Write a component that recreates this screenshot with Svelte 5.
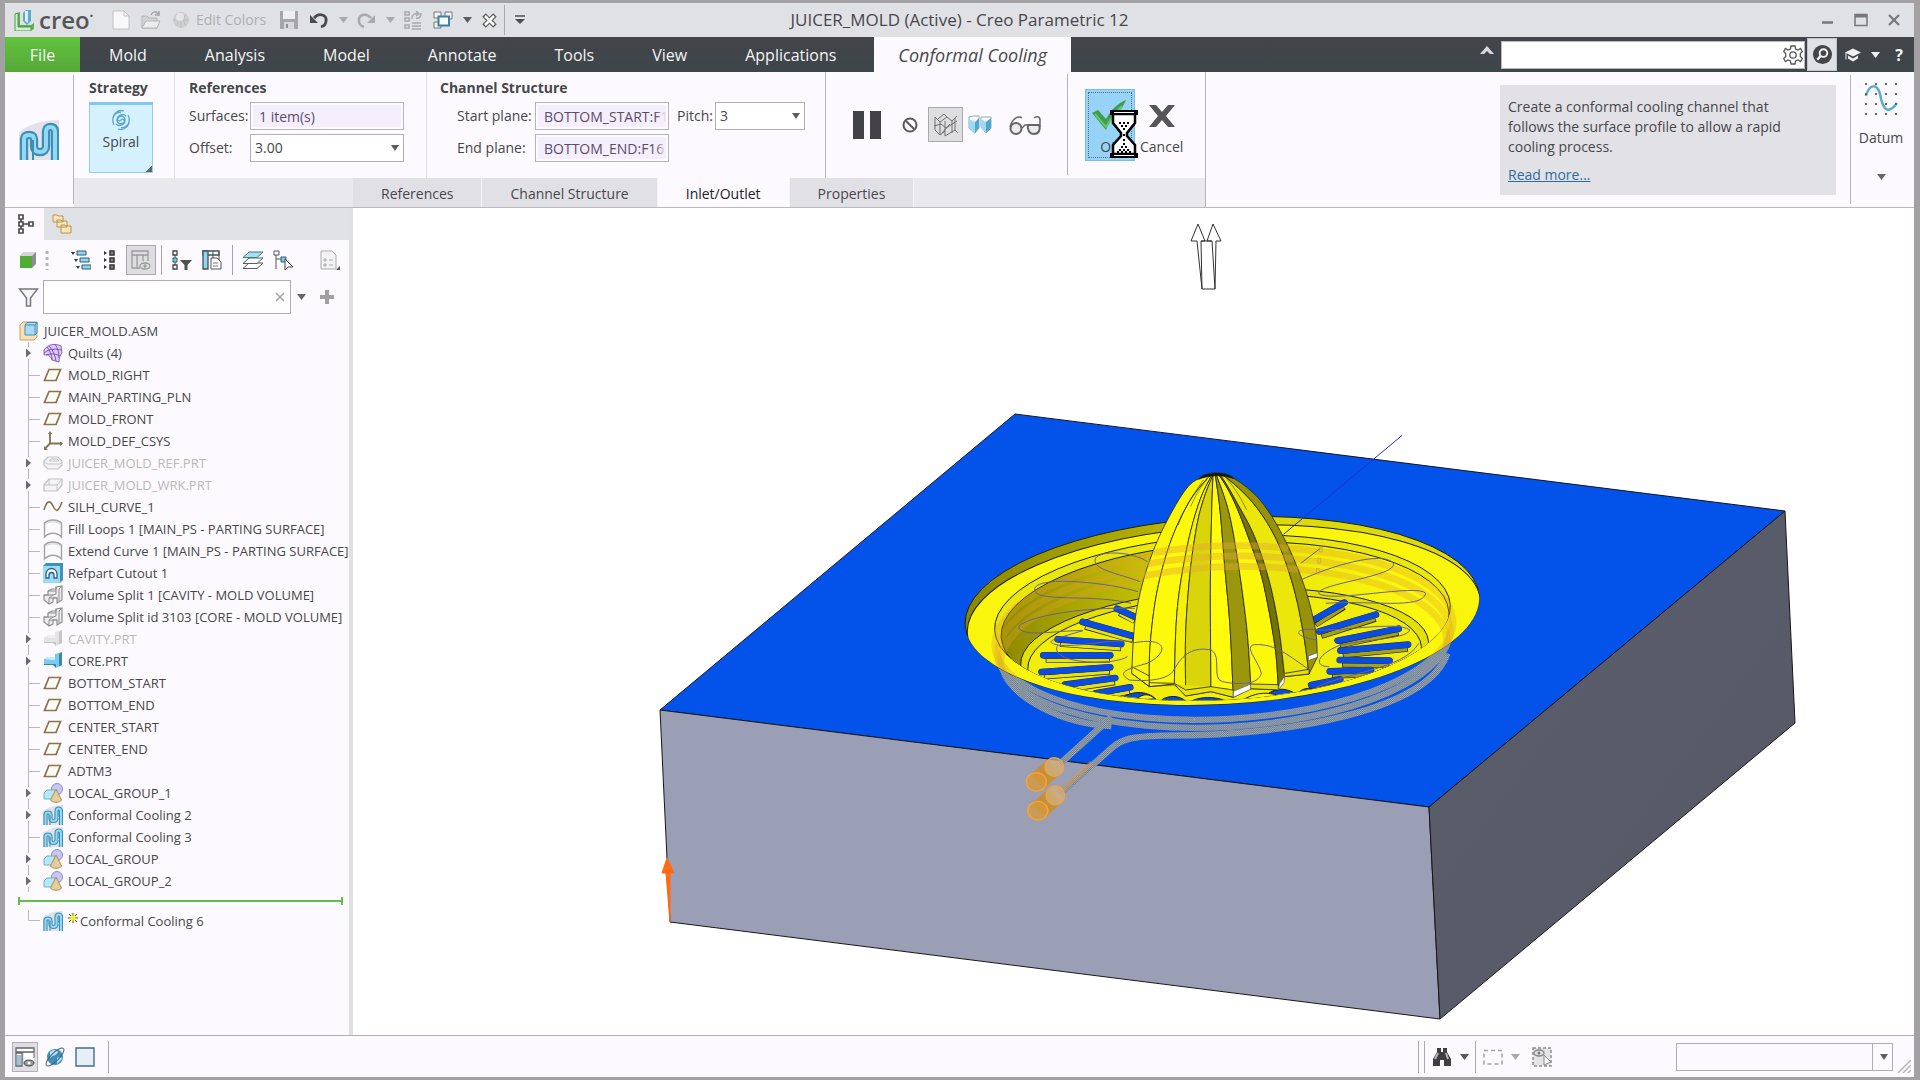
<script>
  const menus = ['Mold', 'Analysis', 'Model', 'Annotate', 'Tools', 'View', 'Applications'];
  const subtabs = ['References', 'Channel Structure', 'Inlet/Outlet', 'Properties'];
  let active = $state('Inlet/Outlet');

  const tree = [
    { t: 'Quilts (4)', i: 'quilt', x: true },
    { t: 'MOLD_RIGHT', i: 'plane' },
    { t: 'MAIN_PARTING_PLN', i: 'plane' },
    { t: 'MOLD_FRONT', i: 'plane' },
    { t: 'MOLD_DEF_CSYS', i: 'csys' },
    { t: 'JUICER_MOLD_REF.PRT', i: 'refpart', x: true, dim: true },
    { t: 'JUICER_MOLD_WRK.PRT', i: 'wrkpart', x: true, dim: true },
    { t: 'SILH_CURVE_1', i: 'curve' },
    { t: 'Fill Loops 1 [MAIN_PS - PARTING SURFACE]', i: 'surface' },
    { t: 'Extend Curve 1 [MAIN_PS - PARTING SURFACE]', i: 'surface' },
    { t: 'Refpart Cutout 1', i: 'cutout' },
    { t: 'Volume Split 1 [CAVITY - MOLD VOLUME]', i: 'split' },
    { t: 'Volume Split id 3103 [CORE - MOLD VOLUME]', i: 'split' },
    { t: 'CAVITY.PRT', i: 'cavity', x: true, dim: true },
    { t: 'CORE.PRT', i: 'core', x: true },
    { t: 'BOTTOM_START', i: 'plane' },
    { t: 'BOTTOM_END', i: 'plane' },
    { t: 'CENTER_START', i: 'plane' },
    { t: 'CENTER_END', i: 'plane' },
    { t: 'ADTM3', i: 'plane' },
    { t: 'LOCAL_GROUP_1', i: 'group', x: true },
    { t: 'Conformal Cooling 2', i: 'cooling', x: true },
    { t: 'Conformal Cooling 3', i: 'cooling' },
    { t: 'LOCAL_GROUP', i: 'group', x: true },
    { t: 'LOCAL_GROUP_2', i: 'group', x: true }
  ];

  // drain slots in the dish floor: x1, y1, x2, y2
  const slots = [
    [496, 506, 545, 530], [400, 546, 540, 588], [330, 598, 507, 612], [290, 646, 476, 646],
    [285, 696, 476, 682], [350, 734, 490, 714], [436, 760, 532, 742],
    [1046, 540, 1132, 488], [1062, 574, 1220, 524], [1114, 602, 1284, 566],
    [1122, 632, 1310, 614], [1120, 660, 1258, 662], [1092, 694, 1206, 690], [1040, 735, 1120, 718]
  ];

  // ribs of the cone, tip to base, left to right
  const ribs = [
    [[285, 40], [225, 62], [185, 106], [132, 200], [95, 285], [65, 380], [44, 490], [35, 640]],
    [[285, 40], [262, 55], [205, 130], [150, 250], [110, 400], [90, 560], [88, 680]],
    [[285, 40], [272, 52], [240, 120], [208, 230], [180, 380], [168, 500], [163, 672]],
    [[285, 40], [276, 52], [250, 120], [230, 200], [210, 340], [197, 520], [197, 708]],
    [[285, 40], [279, 52], [274, 200], [271, 400], [273, 695]],
    [[285, 40], [287, 52], [300, 150], [315, 330], [330, 500], [340, 712]],
    [[285, 40], [292, 52], [325, 150], [350, 280], [380, 500], [393, 686]],
    [[285, 40], [302, 52], [345, 130], [395, 260], [430, 370], [465, 560], [475, 690]],
    [[285, 40], [306, 52], [352, 130], [404, 230], [447, 360], [476, 500], [494, 650]],
    [[285, 40], [318, 52], [400, 130], [470, 240], [520, 380], [550, 520], [567, 642]],
    [[285, 40], [340, 54], [420, 120], [490, 230], [550, 370], [585, 500], [592, 592]]
  ];
  const fills = ['#faf60a', '#fdf90a', '#f4f00a', '#dad50a', '#fffb0a', '#9b970c', '#fcf80a', '#74720a', '#ebe70a', '#96920a'];

  function smooth(p) {
    const out = [];
    for (let i = 0; i < p.length - 1; i++) {
      const a = p[Math.max(i - 1, 0)], b = p[i], c = p[i + 1], d = p[Math.min(i + 2, p.length - 1)];
      for (let k = 0; k < 6; k++) {
        const t = k / 6;
        out.push([0, 1].map((j) =>
          (0.5 * (2 * b[j] + (c[j] - a[j]) * t + (2 * a[j] - 5 * b[j] + 4 * c[j] - d[j]) * t * t + (3 * b[j] - a[j] - 3 * c[j] + d[j]) * t * t * t)).toFixed(1)
        ));
      }
    }
    out.push(p[p.length - 1]);
    return out;
  }
  const lines = ribs.map(smooth);
  const facets = fills.map((fill, i) => ({ fill, points: [...lines[i], ...[...lines[i + 1]].reverse()].map((q) => q.join(',')).join(' ') }));
</script>

{#snippet coolingGlyph()}
  <path d="M0 6C5 2 12 0 20 0V20H0Z" fill="#e2e2e8" />
  <path d="M2.500 20V9.500Q2.500 7.500 5 7.500T7.500 9.500V13Q7.500 16 10.500 16T13.500 13V6Q13.500 3.500 15.700 3.500T18 6V20" fill="none" stroke="#3e8fb5" stroke-width="4.200" />
  <path d="M2.500 20V9.500Q2.500 7.500 5 7.500T7.500 9.500V13Q7.500 16 10.500 16T13.500 13V6Q13.500 3.500 15.700 3.500T18 6V20" fill="none" stroke="#93d9f6" stroke-width="2" />
  <path d="M7 10V20" stroke="#3e8fb5" />
{/snippet}

{#snippet icon(name)}
  <svg class="ico" viewBox="0 0 20 20" aria-hidden="true">
    {#if name === 'plane'}
      <path d="M6 4.500H17.500L13 15.500H1.500Z" fill="#fffdf6" stroke="#8a7449" stroke-width="1.700" />
    {:else if name === 'quilt'}
      <path d="M1 7C5 1 12 0 18 3L19 10C17 12 16 15 16 19L9 17C8 13 4 11 1 12Z" fill="#dccbf5" stroke="#8a63c0" />
      <path d="M1 10C7 5 13 6 19 7M6 3C10 7 12 12 13 18M12 1C15 6 16 9 16 15M3 12C9 10 13 11 17 13M4 4C7 8 9 12 9 17" fill="none" stroke="#7d55b8" />
    {:else if name === 'csys'}
      <path d="M7 1.500V13M7 12.500H19M7 12.500L1.500 18" fill="none" stroke="#80744c" stroke-width="1.800" />
      <path d="M5 3L7 0L9 3ZM17 10.500L20 12.500L17 15ZM1 15V19H5Z" fill="#80744c" />
    {:else if name === 'refpart'}
      <path d="M5 4H15L19 8V12L15 16H5L1 12V8Z" fill="#f4f4f5" stroke="#c3c3c5" stroke-width="1.200" />
      <path d="M1 9L5 11H17L19 9M6 8L8 6H14L16 8Z" fill="none" stroke="#c3c3c5" />
    {:else if name === 'wrkpart'}
      <path d="M6 4H19V10L14 16H1V10Z" fill="#f4f4f5" stroke="#c0c0c3" stroke-width="1.200" />
      <path d="M1 10H14L19 4M14 10V16M6 4V10" fill="none" stroke="#c0c0c3" />
    {:else if name === 'curve'}
      <path d="M1 13C4 3 7 3 10 9S15 16 19 5" fill="none" stroke="#857448" stroke-width="1.600" />
    {:else if name === 'surface'}
      <path d="M1.500 4C6 0 14 0 18.500 4V18C14 13 6 13 1.500 18Z" fill="#fafafc" stroke="#a3a3a6" stroke-width="1.400" />
      <path d="M2 5.500C7 2 13 2 18 5.500" fill="none" stroke="#d5d5d8" />
    {:else if name === 'cutout'}
      <path d="M0 3L3 0H20V17L17 20H0Z" fill="#3f93b8" />
      <path d="M0 3H17V20H0Z" fill="#9adcf7" />
      <path d="M3 15V11a5.500 5.500 0 0 1 11 0V15H11V12a2.500 2.500 0 0 0-5 0V15Z" fill="#fff" stroke="#2d617c" stroke-width="1.300" />
    {:else if name === 'split'}
      <path d="M13 2L19 1V15L14 18V13H10V17L6 19L1 15V10H5V6L9 4H13Z" fill="#ececee" stroke="#8e8e91" stroke-width="1.200" />
      <path d="M13 2V9L10 10H1M19 1L16 4V16M5 6H13M6 13H14M6 13V19M6 13L10 10" fill="none" stroke="#8e8e91" />
    {:else if name === 'cavity' || name === 'core'}
      {@const c = name === 'core'}
      <path d="M12 3L19 1V14L13 17V13H1V8L5 6H12Z" fill={c ? '#7accee' : '#e4e4e5'} />
      <path d="M1 8L5 6H12V9L10 9Z" fill={c ? '#c4edfc' : '#f0f0f1'} />
      <path d="M16 3L19 1V14L16 15.500ZM1 13H13V17L10 14H1Z" fill={c ? '#3787b2' : '#c5c5c7'} />
    {:else if name === 'group'}
      <circle cx="14" cy="6" r="5.500" fill="#c6c7f4" stroke="#8b8cc9" />
      <path d="M1 10L4 7H12V16H1Z" fill="#b3e8f8" stroke="#6fb2cc" />
      <path d="M13 6L18.500 17C17 20 9 20 7.500 17Z" fill="#e5cd9d" stroke="#a98d5b" />
    {:else if name === 'cooling'}
      {@render coolingGlyph()}
    {:else if name === 'asm'}
      <path d="M1 4L4 1H18V16L15 19H1Z" fill="#f9e0b2" stroke="#c4a26a" />
      <path d="M6 4L8 1.500H18V12L16 14H6Z" fill="#a6dcf8" stroke="#4d8db3" />
      <path d="M6 4H16V14M16 4L18 1.500" fill="none" stroke="#4d8db3" />
    {/if}
  </svg>
{/snippet}

{#snippet guide(expandable, end)}
  <svg class="guide" viewBox="0 0 21 22" aria-hidden="true">
    {#if end}
      <path d="M6.500 0V10.500H18" fill="none" stroke="#b9b9bd" />
    {:else if expandable}
      <path d="M6.500 0V5M6.500 17V22" stroke="#b9b9bd" />
      <path d="M4 6.500L9 11L4 15.500Z" fill="#6b6b6f" />
    {:else}
      <path d="M6.500 0V22M6.500 11.500H18" stroke="#b9b9bd" />
    {/if}
  </svg>
{/snippet}

{#snippet tri(color)}
  <svg class="tri" viewBox="0 0 9 6" aria-hidden="true"><path d="M0 0H9L4.500 6Z" fill={color} /></svg>
{/snippet}

<div class="window">
  <header class="title">
    <div class="quick">
      <svg class="logo" viewBox="0 0 22 22" aria-hidden="true">
        <path d="M1 5L6 3V16H17L20 14V20L16 22H1Z" fill="#5cae55" />
        <path d="M1 5L4 4V18H17V22H1Z" fill="#d4ecd0" stroke="#4d9a4a" />
        <path d="M9 4L12 1H17V12L13 16L9 12Z" fill="#5ea9d1" />
        <path d="M11 2H14V14L11 12Z" fill="#dff2fb" />
      </svg>
      <span class="brand">creo<sup>•</sup></span>
      <button class="q" aria-label="New"><svg viewBox="0 0 20 20"><path d="M2 1H13L18 6V19H2Z" fill="#f8f8fa" stroke="#c2c2c6" /><path d="M13 1V6H18" fill="none" stroke="#c2c2c6" /></svg></button>
      <button class="q" aria-label="Open"><svg viewBox="0 0 20 20"><path d="M1 18V6H6L8 8H16V18Z" fill="#d3d3d6" stroke="#b5b5b9" /><path d="M1 18L5 11H19L16 18Z" fill="#ececee" stroke="#b5b5b9" /><path d="M10 5C12 1 15 1 17 4M18 1V5H14" fill="none" stroke="#a5a5a9" stroke-width="1.500" /></svg></button>
      <button class="edit"><svg viewBox="0 0 20 20" aria-hidden="true"><circle cx="10" cy="10" r="8" fill="#d0d0d3" /><path d="M10 2V18M2 10H18M5 4C8 8 8 12 5 16M15 4C12 8 12 12 15 16" stroke="#bcbcc0" fill="none" /><circle cx="9" cy="7" r="4" fill="#e6e6e9" /></svg>Edit Colors</button>
      <button class="q" aria-label="Save"><svg viewBox="0 0 20 20"><path d="M1 1H19V19H1Z" fill="#a6a6aa" /><path d="M4 1H16V9H4Z" fill="#eeeef0" /><path d="M5 12H15V19H5Z" fill="#d8d8da" /><path d="M7 14H9V18H7Z" fill="#909094" /></svg></button>
      <button class="q" aria-label="Undo"><svg viewBox="0 0 20 20"><path d="M5 8C10 2 18 5 17 11C17 14 15 16 12 17" fill="none" stroke="#4a4a4e" stroke-width="2.800" /><path d="M1 5V13H9Z" fill="#4a4a4e" /></svg></button>
      {@render tri('#a9a9ad')}
      <button class="q" aria-label="Redo"><svg viewBox="0 0 20 20"><path d="M15 8C10 2 2 5 3 11C3 14 5 16 8 17" fill="none" stroke="#a9a9ad" stroke-width="2.500" /><path d="M19 5V13H11Z" fill="#a9a9ad" /></svg></button>
      {@render tri('#a9a9ad')}
      <button class="q" aria-label="Regenerate"><svg viewBox="0 0 20 20" fill="none" stroke="#a9a9ad" stroke-width="1.500"><path d="M2 2H6V5H2ZM2 8H6V11H2ZM2 15H6V18H2ZM9 13H18M9 16H18M9 19H18M9 9C9 4 12 3 15 4M13 1L16 4L13 6M18 3C18 7 16 9 13 8" /></svg></button>
      <button class="q" aria-label="Windows"><svg viewBox="0 0 20 20"><path d="M1 2H8V8H1ZM12 2H19V9H12ZM1 12H8V18H1Z" fill="#f4f4f6" stroke="#77777b" /><path d="M5.500 6.500H16V15.500H5.500Z" fill="#f6fcff" stroke="#3b80a3" stroke-width="2" /></svg></button>
      {@render tri('#5c5c60')}
      <button class="q tight" aria-label="Close window"><svg viewBox="0 0 20 20"><path d="M4 5L15 16M15 5L4 16" stroke="#606064" stroke-width="5" /><path d="M5 6L14 15M14 6L5 15" stroke="#fff" stroke-width="2.500" /></svg></button>
      <span class="qsep"></span>
      <button class="q" aria-label="Customize toolbar"><svg viewBox="0 0 20 20"><path d="M5 6H15" stroke="#4d4d51" stroke-width="1.500" /><path d="M5 9H15L10 14Z" fill="#4d4d51" /></svg></button>
    </div>
    <h1>JUICER_MOLD (Active) - Creo Parametric 12</h1>
    <div class="winbtns">
      <button aria-label="Minimize"><svg viewBox="0 0 14 14"><path d="M1 9.500H12" stroke="#77777a" stroke-width="2.500" /></svg></button>
      <button aria-label="Maximize"><svg viewBox="0 0 14 14"><path d="M1 1.500H13V12.500H1Z" fill="none" stroke="#77777a" stroke-width="1.500" /><path d="M1 3H13" stroke="#77777a" stroke-width="3" /></svg></button>
      <button aria-label="Close"><svg viewBox="0 0 14 14"><path d="M2 2L12 12M12 2L2 12" stroke="#77777a" stroke-width="2.200" /></svg></button>
    </div>
  </header>

  <nav class="menu">
    <button class="file">File</button>
    {#each menus as m}<button>{m}</button>{/each}
    <button class="current">Conformal Cooling</button>
    <div class="find">
      <button class="collapse" aria-label="Collapse ribbon"><svg viewBox="0 0 14 9"><path d="M0 9L7 1L14 9L10 9L7 6L4 9Z" fill="#d8d8da" /></svg></button>
      <div class="searchbox">
        <input type="text" aria-label="Command search" />
        <svg viewBox="-10 -10 20 20" aria-hidden="true"><path d="M-2 -9H2L2.600 -6L5 -5L7.500 -6.500L9.300 -3.500L7.300 -1.500V1.500L9.300 3.500L7.500 6.500L5 5L2.600 6L2 9H-2L-2.600 6L-5 5L-7.500 6.500L-9.300 3.500L-7.300 1.500V-1.500L-9.300 -3.500L-7.500 -6.500L-5 -5L-2.600 -6Z" fill="#fff" stroke="#555559" stroke-width="1.300" /><circle r="3.200" fill="none" stroke="#555559" stroke-width="1.300" /></svg>
      </div>
      <button class="go" aria-label="Search"><svg viewBox="0 0 22 22"><circle cx="11" cy="11" r="10" fill="#434549" /><circle cx="12" cy="9.500" r="4" fill="none" stroke="#f4f4f6" stroke-width="2" /><path d="M9 12.500L5.500 16.500" stroke="#f4f4f6" stroke-width="2.500" /></svg></button>
      <button class="learn" aria-label="Learning"><svg viewBox="0 0 16 14"><path d="M0 5L8 1L16 5L8 9Z" fill="#f0f0f2" /><path d="M3 8V11L8 14L13 11V8L8 11Z" fill="#f0f0f2" /><path d="M1 5V12" stroke="#f0f0f2" /></svg></button>
      {@render tri('#f0f0f2')}
      <button class="help" aria-label="Help">?</button>
    </div>
  </nav>

  <section class="ribbon">
    <div class="feature"><svg viewBox="0 0 20 20" preserveAspectRatio="none" aria-hidden="true">{@render coolingGlyph()}</svg></div>
    <div class="dash">
      <div class="groups">
        <div class="g soft strategy">
          <h2>Strategy</h2>
          <button class="spiral">
            <svg viewBox="0 0 22 22" fill="none" stroke="#5ba6cc" stroke-width="1.300" aria-hidden="true"><path d="M11 11C13 9 15 11 14 13C12 16 7 15 7 11C7 6 13 4 16 7M11 11C9 13 7 11 8 9C10 6 15 7 15 11C15 16 9 18 6 15M3 12C2 5 8 0 14 2M19 10C20 17 14 22 8 20M4 16C1 10 4 3 11 3.500M18 6C21 12 18 19 11 18.500" /></svg>
            Spiral
            <i class="corner"></i>
          </button>
        </div>
        <div class="g soft refs">
          <h2>References</h2>
          <label for="surf">Surfaces:</label>
          <input id="surf" class="pick" type="text" value="1 item(s)" />
          <label for="off">Offset:</label>
          <span class="sel"><select id="off"><option>3.00</option></select></span>
        </div>
        <div class="g chan">
          <h2>Channel Structure</h2>
          <label for="sp">Start plane:</label>
          <span class="fade"><input id="sp" class="pick" type="text" value="BOTTOM_START:F15" /></span>
          <label for="pitch" class="pl">Pitch:</label>
          <span class="sel"><select id="pitch"><option>3</option></select></span>
          <label for="ep">End plane:</label>
          <span class="fade"><input id="ep" class="pick" type="text" value="BOTTOM_END:F16" /></span>
        </div>
        <div class="g ctl">
          <button aria-label="Pause"><svg width="28" height="28" viewBox="0 0 28 28"><path d="M0 0H11V28H0ZM17 0H28V28H17Z" fill="#434347" /></svg></button>
          <button aria-label="No preview"><svg width="16" height="16" viewBox="0 0 16 16"><circle cx="8" cy="8" r="6.500" fill="none" stroke="#5a5a5e" stroke-width="2" /><path d="M4 4L12 12" stroke="#5a5a5e" stroke-width="2" /></svg></button>
          <button class="on" aria-label="Unattached preview"><svg width="26" height="24" viewBox="0 0 26 24" fill="none" stroke="#707074"><path d="M2 4L7 9L14 4L11 1L5 6M7 9V22L2 17V4M7 22L12 18M14 4L19 8L24 3M12 8V23L22 17V5M19 8V20M1 13L8 11L13 15L24 8M9 20L17 11M22 17L25 20" /></svg></button>
          <button aria-label="Attached preview"><svg width="24" height="20" viewBox="0 0 24 20"><path d="M1 2L5 1H11V13L7 18L1 13ZM13 2H19L23 2V13L18 18L13 12Z" fill="#f6fcff" stroke="#9aa7ae" /><path d="M7 7L11 3V13L7 18ZM18 7L23 3V13L18 18Z" fill="#4aa9d3" /><path d="M1 4L7 7V18L1 13ZM13 4L18 7V18L13 12Z" fill="#9bdaf3" /></svg></button>
          <button aria-label="Verify"><svg width="34" height="20" viewBox="0 0 34 20" fill="none" stroke="#66666a" stroke-width="2"><circle cx="8" cy="13.500" r="5.500" fill="#ececee" /><path d="M20 10H31C33 14 31 19 26 19S19 14 20 10Z" fill="#ececee" /><path d="M14 13L17 10H20M2 12C4 4 10 0 14 3M32 12V5C32 1 28 1 26 3" stroke-width="1.500" /></svg></button>
        </div>
        <div class="g done">
          <button class="ok"><svg width="36" height="32" viewBox="0 0 36 32" aria-hidden="true"><path d="M0 13L6 10L14 19C19 10 26 3 34 0L30 8C23 13 18 21 14 30Z" fill="#3e9c4c" /><path d="M3 14L14 27C19 18 24 11 30 6" fill="none" stroke="#69c26e" stroke-width="2" /></svg><span>OK</span></button>
          <svg class="hour" viewBox="0 0 30 50" aria-hidden="true"><path d="M4 5H26V14L18 24V27L26 36V45H4V36L12 27V24L4 14Z" fill="#fff" stroke="#000" stroke-width="2.500" /><path d="M1 1H29V6H1ZM1 44H29V49H1Z" fill="#000" /><path d="M5 3.500H25M5 46.500H25" stroke="#fff" /><path d="M10 13H12V15H10ZM14 13H16V15H14ZM18 13H20V15H18ZM12 16H14V18H12ZM16 16H18V18H16ZM14 19H16V21H14ZM14 25H16V27H14ZM14 30H16V32H14ZM14 34H16V36H14ZM12 37H14V39H12ZM16 37H18V39H16ZM10 40H12V42H10ZM14 40H16V42H14ZM18 40H20V42H18ZM8 42H10V44H8ZM12 42H14V44H12ZM16 42H18V44H16ZM20 42H22V44H20Z" fill="#000" /></svg>
          <button class="cancel"><svg width="26" height="22" viewBox="0 0 26 22" aria-hidden="true"><path d="M0 0H7L13 7L19 0H26L17 11L26 22H19L13 15L7 22H0L9 11Z" fill="#55555a" /></svg><span>Cancel</span></button>
        </div>
      </div>
      <div class="subtabs">
        {#each subtabs as s}<button class:sel-tab={s === active} onclick={() => (active = s)}>{s}</button>{/each}
      </div>
    </div>
    <aside class="tip">
      <p>Create a conformal cooling channel that follows the surface profile to allow a rapid cooling process.</p>
      <a href="#more">Read more...</a>
    </aside>
    <button class="datum">
      <svg class="wave" viewBox="0 0 34 34" aria-hidden="true"><path d="M2 14C5 2 13 1 16 12C19 30 25 32 33 21" fill="none" stroke="#57acd0" stroke-width="2.500" />{#each [1, 11, 21, 31] as x}{#each [1, 11, 21, 31] as y}<rect {x} {y} width="2" height="2" fill="#69696d" />{/each}{/each}</svg>
      <span>Datum</span>
      {@render tri('#66666a')}
    </button>
  </section>

  <main>
    <div class="side">
      <div class="paneltabs">
        <button class="first" aria-label="Model tree"><svg viewBox="0 0 16 20" fill="#fff" stroke="#4c4c50" stroke-width="1.700"><path d="M3 5V15M5 10H12" /><path d="M1 1H5V5H1ZM1 8H5V12H1ZM1 15H5V19H1ZM11 8H15V12H11Z" /></svg></button>
        <button aria-label="Folder browser"><svg viewBox="0 0 20 20" fill="#fbe6bb" stroke="#b9924f"><path d="M1 1H5L6 2H11V8H1ZM5 6H9L10 7H15V13H5ZM9 11H13L14 12H19V19H9Z" /></svg></button>
      </div>
      <div class="tools">
        <button class="w18" aria-label="Model display"><svg viewBox="0 0 18 18"><path d="M1 5L5 1H17V13L13 17H1Z" fill="#8d8d91" /><path d="M1 5L5 1H17L13 5Z" fill="#d6d6d9" /><path d="M1 5H13V17H1Z" fill="#52ad35" /></svg></button>
        <svg class="grip" viewBox="0 0 4 20" aria-hidden="true"><path d="M2 1V20" stroke="#b5b5b9" stroke-width="3" stroke-dasharray="3 3" /></svg>
        <button class="w20" aria-label="Expand tree"><svg viewBox="0 0 20 20"><path d="M6 1H15V5H6ZM9 8H18V12H9ZM11 15H20V19H11Z" fill="#8fd4f0" stroke="#2f5f77" /><path d="M0 2H4L2 5ZM3 9H7L5 12ZM5 16H9L7 19Z" fill="#333" /></svg></button>
        <button class="w20 near" aria-label="Collapse tree"><svg viewBox="0 0 20 20"><path d="M9 1H13V5H9ZM9 8H13V12H9ZM9 15H13V19H9Z" fill="#888" stroke="#333" stroke-width="1.500" /><path d="M3 1V5L6 3ZM3 8V12L6 10ZM3 15V19L6 17Z" fill="#333" /></svg></button>
        <button class="on" aria-label="Show columns"><svg viewBox="0 0 20 20" fill="none" stroke="#9a9a9e" stroke-width="1.300"><path d="M1 1H17V5H1ZM1 5H6V18H1ZM6 5V18H9M12 5V11M17 5V11" /><ellipse cx="14" cy="16" rx="5" ry="3" /><circle cx="14" cy="16" r="1" /></svg></button>
        <span class="tsep"></span>
        <button class="w20" aria-label="Tree filters"><svg viewBox="0 0 20 20"><path d="M3 5V15" stroke="#444" /><path d="M1 1H5V5H1ZM1 15H5V19H1Z" fill="#fff" stroke="#444" stroke-width="1.300" /><path d="M1 8H5V12H1Z" fill="#7ccbed" stroke="#2f5f77" /><path d="M8 10H20L15.500 15V20H12.500V15Z" fill="#505054" /></svg></button>
        <button class="w20" aria-label="Tree columns"><svg viewBox="0 0 20 20"><path d="M1 1H17V5H1Z" fill="#fff" stroke="#44525a" stroke-width="1.300" /><path d="M1 1H6V19H1Z" fill="#8fd4f0" stroke="#44525a" stroke-width="1.300" /><path d="M11 1V10M17 1V10" stroke="#44525a" /><path d="M9 8H15L19 12V19H9Z" fill="#fff" stroke="#555" /><path d="M11 13H16M11 16H16" stroke="#777" /></svg></button>
        <span class="tsep"></span>
        <button class="w20" aria-label="Layers"><svg viewBox="0 0 20 20" fill="#fff" stroke="#5b5b5f"><path d="M6 13H20L14 18.500H0Z" /><path d="M6 8H20L14 13.500H0Z" /><path d="M6 2H20L14 7.500H0Z" fill="#a6dff0" stroke="#3a7d8b" /></svg></button>
        <button class="w20" aria-label="Select in tree"><svg viewBox="0 0 20 20"><path d="M3 5V19M3 9H8" stroke="#555" fill="none" /><path d="M1 1H6V5H1Z" fill="#fff" stroke="#555" /><path d="M8 7H13V12H8Z" fill="#7ccbed" stroke="#2f5f77" /><path d="M12 9L20 17L15 17L12 20Z" fill="#fff" stroke="#444" /></svg></button>
        <button class="w20 last" aria-label="Settings"><svg viewBox="0 0 20 20" fill="none" stroke="#a9a9ad"><path d="M1 1H12L16 5V19H1Z" fill="#f3f3f5" /><path d="M4 9H6V11H4ZM4 14H6V16H4ZM9 10H13M9 15H13" /><path d="M20 16V20H16Z" fill="#555" stroke="none" /></svg></button>
      </div>
      <div class="filter">
        <svg class="funnel" viewBox="0 0 20 20" aria-hidden="true"><path d="M1 2H19L12 11V19H8V11Z" fill="#f6f6f8" stroke="#77777b" stroke-width="1.500" /></svg>
        <div class="fbox"><input type="text" aria-label="Filter tree" /><button aria-label="Clear"><svg viewBox="0 0 10 10"><path d="M1 1L9 9M9 1L1 9" stroke="#a3a3a7" stroke-width="1.500" /></svg></button></div>
        {@render tri('#66666a')}
        <button class="plus" aria-label="Add"><svg viewBox="0 0 14 14"><path d="M7 0V14M0 7H14" stroke="#a0a0a4" stroke-width="4" /></svg></button>
      </div>
      <ul class="tree">
        <li class="root">{@render icon('asm')}<span>JUICER_MOLD.ASM</span></li>
        {#each tree as n}
          <li class:dim={n.dim}>{@render guide(n.x, false)}{@render icon(n.i)}<span>{n.t}</span></li>
        {/each}
        <li class="insert" aria-hidden="true"></li>
        <li>{@render guide(false, true)}{@render icon('cooling')}<svg class="spark" viewBox="0 0 10 10" aria-hidden="true"><path d="M1 1L9 9M9 1L1 9M5 0V10M0 5H10" stroke="#55551a" /><circle cx="5" cy="5" r="2.800" fill="#f4ee20" /></svg><span class="new">Conformal Cooling 6</span></li>
      </ul>
    </div>

    <svg class="scene" viewBox="353 208 1561 827" role="img" aria-label="Juicer mold core with conformal cooling channel">
      <defs>
        <linearGradient id="wall" x1="0" x2="1"><stop offset="0" stop-color="#8d8900" /><stop offset=".25" stop-color="#b8b302" /><stop offset=".45" stop-color="#d9d408" /><stop offset=".7" stop-color="#f0ec0a" /><stop offset="1" stop-color="#fffb10" /></linearGradient>
        <linearGradient id="edge" x1="0" x2="1"><stop offset="0" stop-color="#8a8600" /><stop offset=".35" stop-color="#b0ac00" /><stop offset=".6" stop-color="#dedA0a" /></linearGradient>
        <linearGradient id="dark" x1="0" x2="1" y1="0" y2="1"><stop offset="0" stop-color="#5b5e6b" /><stop offset="1" stop-color="#565965" /></linearGradient>
        <pattern id="mesh" width="6" height="6" patternUnits="userSpaceOnUse"><rect width="6" height="6" fill="#4f7cb8" /><rect width="3" height="3" fill="#bba98a" /><rect x="3" y="3" width="3" height="3" fill="#bba98a" /></pattern>
        <clipPath id="rimClip"><ellipse cx="790" cy="512" rx="721" ry="280" transform="rotate(-3.500 790 512)" /></clipPath>
        <clipPath id="bowlClip"><ellipse cx="791" cy="533" rx="639" ry="246" transform="rotate(-3.500 791 533)" /></clipPath>
      </defs>
      <g stroke="#16161a" stroke-width="1" stroke-linejoin="round">
        <path d="M660 710L1015 414L1785 511L1429 807Z" fill="#0353ea" />
        <path d="M660 710L1429 807L1440 1019L670 922Z" fill="#9b9fb5" />
        <path d="M1429 807L1785 511L1795 723L1440 1019Z" fill="url(#dark)" />
      </g>
      <path d="M670 922L666 873H662L667 858L674 873H670Z" fill="#ff6a13" stroke="#ff6a13" />
      <g fill="none" stroke="#333">
        <path d="M1202 289L1197 241H1191L1198 224L1205 241H1201L1202 289H1215L1212 241H1207L1213 224L1221 241H1216L1215 289M1201 241H1212" />
      </g>

      <g transform="translate(940 440) scale(0.35714 0.33333)">
        <g fill="none" stroke="url(#mesh)" stroke-width="19">
          <ellipse cx="795" cy="582" rx="638" ry="255" transform="rotate(-3.500 795 582)" />
          <ellipse cx="795" cy="608" rx="632" ry="253" transform="rotate(-3.500 795 608)" />
          <path d="M480 832L335 972M1420 640C1370 805 1000 887 620 887C540 890 510 895 480 925L335 1062M180 700C210 770 330 850 480 858" />
        </g>
        <g stroke="#202000" stroke-width="1">
          <ellipse cx="790" cy="512" rx="721" ry="280" transform="rotate(-3.500 790 512)" fill="url(#edge)" vector-effect="non-scaling-stroke" />
          <g clip-path="url(#rimClip)">
            <ellipse cx="795" cy="532" rx="720" ry="274" transform="rotate(-4 795 532)" fill="#f9f50c" vector-effect="non-scaling-stroke" />
          </g>
          <ellipse cx="791" cy="533" rx="639" ry="246" transform="rotate(-3.500 791 533)" fill="#eae610" vector-effect="non-scaling-stroke" />
          <g clip-path="url(#bowlClip)">
            <ellipse cx="798" cy="554" rx="628" ry="246" transform="rotate(-3.500 798 554)" fill="url(#wall)" vector-effect="non-scaling-stroke" />
            <ellipse cx="797" cy="640" rx="572" ry="194" transform="rotate(-3.500 797 640)" fill="#e3df0a" vector-effect="non-scaling-stroke" />
            <ellipse cx="797" cy="654" rx="552" ry="190" transform="rotate(-3.500 797 654)" fill="#f2ee0c" vector-effect="non-scaling-stroke" />
            {#each slots as [a, b, c, d]}
              <g stroke-linecap="round">
                <path d={`M${a + 6} ${b + 15}L${c} ${d + 14}`} stroke="#222200" stroke-width="15" stroke-linecap="butt" />
                <path d={`M${a + 8} ${b + 15}L${c - 2} ${d + 14}`} stroke={a > 1000 ? '#a8a306' : '#e6e20a'} stroke-width="11" stroke-linecap="butt" />
                <path d={`M${a} ${b}L${c} ${d}`} stroke="#1b2a60" stroke-width="20" />
                <path d={`M${a} ${b}L${c} ${d}`} stroke="#0b4be0" stroke-width="18" />
              </g>
            {/each}
            <path d="M500 783C530 750 580 750 605 778M620 780C640 765 670 765 690 785M900 780C930 740 970 740 1000 765M1000 765C1010 740 1050 740 1060 755M700 785C730 768 770 770 800 782" fill="#0b4be0" vector-effect="non-scaling-stroke" />
            <path d="M548 780C570 755 590 765 600 775M850 778C900 750 930 760 960 770" fill="#faf60c" vector-effect="non-scaling-stroke" />
          </g>
        </g>
        <g clip-path="url(#rimClip)" fill="none" stroke="#e0a32a" stroke-opacity=".34" stroke-width="20">
          <ellipse cx="795" cy="580" rx="642" ry="255" transform="rotate(-3.500 795 580)" />
          <ellipse cx="795" cy="608" rx="634" ry="253" transform="rotate(-3.500 795 608)" />
          <ellipse cx="795" cy="638" rx="626" ry="253" transform="rotate(-3.500 795 638)" />
        </g>
      </g>

      <g transform="translate(1120 460) scale(0.33333)" stroke="#2a2a10" stroke-width="2.500" stroke-linejoin="round">
        {#each facets as f}<polygon points={f.points} fill={f.fill} />{/each}
        <path d="M35 620L88 648M35 640L88 680M88 668L163 670L197 690L273 680M88 680L163 674L197 708L273 695L340 712V690L273 680M393 686L475 690V674L393 672M494 650L567 642V628L494 640" fill="#e6e20a" />
        <path d="M340 712V694L392 672V688ZM475 690L478 672L494 648L492 668ZM565 602V588L592 578V592Z" fill="#fff" stroke="#666" />
        <path d="M236 58C248 34 325 32 342 56C310 44 268 44 236 58Z" fill="#111" />
        <path d="M250 60C215 110 190 150 175 195M262 58C235 90 225 110 212 140M320 56C350 90 365 120 380 150" fill="none" stroke-width="1.500" />
      </g>

      <g transform="translate(940 440) scale(0.35714 0.33333)">
        <g fill="none" stroke="#e3a63a" stroke-opacity=".42" stroke-width="20">
          <path d="M598 338C740 312 880 312 975 326M580 372C740 342 880 344 990 356M568 408C740 372 880 374 1004 388" />
        </g>

        <g fill="none" stroke="#68628f" stroke-width="1">
          <path vector-effect="non-scaling-stroke" d="M580 365C540 335 450 330 435 355C425 390 500 400 560 425M555 455C480 430 280 405 265 445C255 490 420 460 535 490M545 505C400 500 240 530 220 560C225 595 330 570 400 572C310 600 290 605 330 615C380 625 500 590 545 608C640 590 640 640 580 670C510 690 500 700 530 720C580 725 640 720 655 690C680 640 710 620 760 630C790 650 760 715 790 725C840 735 890 735 900 700C890 660 850 620 880 614C940 610 980 650 1035 690M1010 370L1065 325M1010 420C1090 380 1240 330 1270 370C1280 410 1060 430 1060 460C1090 490 1340 430 1360 460C1350 510 1200 480 1080 490M1055 600C990 590 990 565 1040 568C1100 580 1280 540 1315 570C1310 600 1150 600 1110 620C1050 650 1050 680 1090 680M1050 745C1120 700 1300 690 1340 610M330 615C300 670 480 680 525 650" />
          <path vector-effect="non-scaling-stroke" stroke="#1f2fd8" d="M1294 -14L962 283" />
        </g>

        <g fill="#c98e2c" fill-opacity=".85" stroke="none">
          <path d="M252 1004L300 960L338 1000L292 1046Z" /><path d="M256 1090L304 1046L342 1086L296 1132Z" />
        </g>
        <g fill="#d99a36" fill-opacity=".75" stroke="#f7a33a" stroke-width="4">
          <ellipse cx="270" cy="1026" rx="28" ry="28" /><ellipse cx="274" cy="1112" rx="28" ry="28" />
          <ellipse cx="320" cy="981" rx="26" ry="28" fill="#cdb187" /><ellipse cx="323" cy="1066" rx="26" ry="28" fill="#cdb187" />
          <ellipse cx="322" cy="977" rx="9" ry="10" fill="none" stroke-width="2" /><ellipse cx="324" cy="1064" rx="9" ry="10" fill="none" stroke-width="2" />
          <path d="M345 1048L425 968" stroke-opacity=".4" stroke-width="14" />
          <path d="M1062 322H1070V336H1062ZM1058 355H1066V369H1058ZM1054 386H1062V400H1054Z" fill="none" stroke-width="2" stroke="#c79a60" />
        </g>
      </g>
    </svg>
  </main>

  <footer>
    <button class="on" aria-label="Toggle navigator"><svg viewBox="0 0 20 20"><path d="M1 1H19V5H1ZM1 6H7V19H1Z" fill="#fff" stroke="#66666a" stroke-width="1.300" /><path d="M2 8H6V18H2Z" fill="#9cc3dc" /><path d="M9 6H19V14H9Z" fill="#fff" /><path d="M19 6V11" stroke="#66666a" /><ellipse cx="14" cy="16" rx="5" ry="3" fill="#9b9b9f" stroke="#444" /><circle cx="14" cy="16" r="1.500" fill="#fff" /></svg></button>
    <button class="sb" aria-label="Browser"><svg viewBox="0 0 20 20"><circle cx="10" cy="10" r="8" fill="#3a8fc0" /><path d="M5 5C8 2 12 3 13 5C11 9 8 8 5 11ZM12 11C15 9 17 10 17 12L12 17Z" fill="#b7e2f5" /><ellipse cx="10" cy="10" rx="12" ry="4" transform="rotate(-45 10 10)" fill="none" stroke="#55606a" /></svg></button>
    <button class="sb" aria-label="Full screen"><svg viewBox="0 0 20 20"><path d="M1 1H19V19H1Z" fill="#e8eef5" stroke="#3f6f8a" stroke-width="1.400" /></svg></button>
    <span class="fsep a"></span>
    <div class="fright">
      <span class="fsep"></span><span class="fsep"></span>
      <button class="sb" aria-label="Find"><svg viewBox="0 0 20 20"><path d="M5 1H9V5H11V1H15V5L19 12V19H12V13H8V19H1V12L5 5Z" fill="#3f3f43" /><path d="M3 12L6 6M14 6L16 12" stroke="#b5b5b9" stroke-width="2" /></svg></button>
      {@render tri('#55555a')}
      <span class="fsep"></span>
      <button class="sb" aria-label="Box select"><svg viewBox="0 0 20 20"><path d="M1 3.500H19V17H1Z" fill="none" stroke="#a3a3a7" stroke-width="1.500" stroke-dasharray="4 3" /></svg></button>
      {@render tri('#a9a9ad')}
      <button class="sb" aria-label="Selection preview"><svg viewBox="0 0 20 20"><path d="M1 1H19V19H1Z" fill="#e4e4e7" stroke="#8d8d91" stroke-width="1.500" stroke-dasharray="3 2" /><ellipse cx="7" cy="6" rx="5" ry="3" fill="none" stroke="#88888c" stroke-width="1.500" /><circle cx="7" cy="6" r="1.500" fill="#77777b" /><path d="M12 8V18L19 15Z" fill="#f6f6f8" stroke="#88888c" /></svg></button>
      <span class="sel fs"><select aria-label="Selection filter"><option></option></select></span>
      <svg class="resize" viewBox="0 0 14 14" aria-hidden="true"><path d="M1 14L14 1M6 14L14 6M11 14L14 11" stroke="#b5b5b9" stroke-width="1.500" /></svg>
    </div>
  </footer>
</div>

<style>
  :global(body) { margin: 0; }
  .window {
    --ink: #47474b;
    box-sizing: border-box;
    height: 100vh;
    min-height: 960px;
    display: flex;
    flex-direction: column;
    border: solid #a3a1a4;
    border-width: 3px 6px 3px 5px;
    background: #fcfafe;
    color: var(--ink);
    font: 14px/20px "Open Sans", "Noto Sans", sans-serif;
  }
  .window * { box-sizing: border-box; }
  button { font: inherit; color: inherit; background: none; border: 0; padding: 0; margin: 0; }
  input, select { font: inherit; color: inherit; }
  svg { display: block; flex: none; }
  .tri { width: 9px; height: 6px; }

  .title { display: grid; grid-template-columns: 1fr auto 1fr; align-items: center; height: 34px; background: #e0e1e4; }
  .title h1 { margin: 0; font-size: 17px; font-weight: 400; }
  .quick { display: flex; align-items: center; padding-left: 9px; }
  .logo { width: 22px; height: 22px; margin-right: 3px; }
  .brand { width: 72px; font-size: 24px; font-weight: 600; line-height: 28px; color: #55565a; }
  .brand sup { font-size: 9px; line-height: 1px; vertical-align: 10px; }
  .q { margin-right: 10px; }
  .tri + .q { margin-left: 8px; }
  .q.tight { margin-right: 4px; }
  .q svg, .edit svg { width: 20px; height: 20px; }
  .edit { display: flex; align-items: center; gap: 5px; margin-right: 13px; color: #aeaeb2; font-size: 14px; }
  .qsep { width: 1px; height: 30px; background: #aaaaae; margin-right: 5px; }
  .winbtns { display: flex; justify-content: flex-end; gap: 19px; padding-right: 13px; }
  .winbtns svg { width: 14px; height: 14px; }

  .menu { display: flex; height: 35px; background: linear-gradient(#43444a, #3d464a); color: #f4f4f6; font-size: 16px; flex: none; }
  .menu > button { padding: 0 29px; }
  .menu .file { width: 75px; padding: 0; background: linear-gradient(#62c23f, #55a838); }
  .menu .current { margin-left: 9px; padding: 0 24px; background: #fcfafe; color: var(--ink); font-size: 18px; font-style: italic; }
  .find { display: flex; margin-left: auto; align-items: center; padding-right: 11px; }
  .collapse { margin-right: 7px; align-self: flex-start; padding-top: 8px; }
  .collapse svg { width: 14px; height: 9px; }
  .searchbox { width: 304px; height: 28px; display: flex; align-items: center; background: #fff; border: 1px solid #b9b9bd; margin-right: 2px; }
  .searchbox input { flex: 1; min-width: 0; height: 100%; border: 0; outline: 0; }
  .searchbox svg { width: 20px; height: 20px; margin-right: 1px; }
  .go { width: 30px; height: 33px; background: #e0e1e4; border: 1px solid #c3c3c7; display: grid; place-items: center; margin-right: 8px; }
  .go svg { width: 21px; height: 21px; }
  .learn { margin-right: 10px; }
  .learn svg { width: 16px; height: 15px; }
  .help { font-weight: 700; font-size: 16px; margin-left: 15px; }

  .ribbon { display: flex; height: 136px; border-bottom: 1px solid #b9b9be; flex: none; }
  .feature { width: 69px; margin: 3px 0; border-right: 1px solid #b4b4b9; display: grid; place-items: center; }
  .feature svg { width: 40px; height: 40px; }
  .dash { width: 1132px; border-right: 1px solid #b4b4b9; display: flex; flex-direction: column; margin-right: 12px; }
  .groups { display: flex; height: 106px; }
  .g { border-right: 1px solid #b4b4b9; }
  .g.soft { border-color: #e2e0e6; }
  .g:last-child { border-right: 0; }
  h2 { margin: 0; font-size: 14px; font-weight: 700; line-height: 20px; white-space: nowrap; }
  .strategy { width: 101px; padding: 6px 0 0 15px; }
  .spiral { width: 64px; height: 71px; margin-top: 4px; padding-top: 4px; background: #d5f1fd; border: 1px solid #8fcdeb; border-top: 3px solid #84c8ee; display: flex; flex-direction: column; align-items: center; position: relative; gap: 1px; justify-content: flex-start; }
  .spiral svg { width: 22px; height: 22px; }
  .corner { position: absolute; right: 0; bottom: 0; width: 7px; height: 7px; background: linear-gradient(135deg, transparent 50%, #5a6a74 50%); }
  .refs { width: 252px; padding: 6px 0 0 14px; display: grid; grid-template-columns: 61px 154px; grid-template-rows: 20px 28px 28px; row-gap: 4px; align-items: center; }
  .refs h2 { grid-column: span 2; }
  .pick { width: 100%; height: 28px; padding: 0 2px 0 8px; border: 1px solid #b4b4b9; background: #f5eefd; box-shadow: inset 0 0 0 2px #fcfafe; color: #5b4d6a; }
  .sel { position: relative; display: block; height: 28px; }
  .sel select { width: 100%; height: 100%; appearance: none; background: #fff; border: 1px solid #b0b0b4; border-radius: 0; padding: 0 4px; }
  .sel::after { content: ""; position: absolute; right: 5px; top: 11px; border: solid transparent; border-width: 6px 4px 0; border-top-color: #5c5c60; pointer-events: none; }
  .chan { width: 399px; padding: 6px 0 0 13px; display: grid; grid-template-columns: 95px 134px 46px 90px; grid-template-rows: 20px 28px 28px; row-gap: 4px; align-items: center; }
  .chan h2 { grid-column: span 4; }
  .chan label { padding-left: 17px; }
  .chan .pl { padding-left: 8px; }
  .fade { position: relative; }
  .fade::after { content: ""; position: absolute; right: 3px; top: 3px; bottom: 3px; width: 10px; background: linear-gradient(90deg, #f5eefd00, #f5eefd); pointer-events: none; }
  .ctl { width: 242px; padding: 0 0 0 27px; display: flex; align-items: center; margin-top: 2px; height: 101px; gap: 5px; }
  .ctl button:first-child { margin-right: 16px; }
  .ctl .on { width: 35px; height: 35px; background: #dedee1; border: 1px solid #a9a9ad; display: grid; place-items: center; margin-left: 5px; }
  .ctl button:last-child { margin-left: 11px; }
  .done { display: flex; padding: 17px 0 0 17px; position: relative; }
  .ok { width: 50px; height: 72px; background: #97d3f7; border: 1px solid #77bde6; outline: 1px dotted #4a6f86; outline-offset: -4px; display: flex; flex-direction: column; align-items: center; justify-content: flex-end; gap: 5px; padding-bottom: 3px; }
  .hour { position: absolute; left: 41px; top: 37px; width: 30px; height: 50px; }
  .cancel { display: flex; flex-direction: column; align-items: center; justify-content: flex-end; gap: 10px; margin-left: 5px; padding-bottom: 4px; height: 72px; }
  .subtabs { display: flex; flex: 1; background: #e9e9ed; padding-left: 279px; }
  .subtabs button { padding: 2px 28px 0; background: #e1e1e5; border-right: 1px solid #f4f4f8; white-space: nowrap; }
  .subtabs .sel-tab { background: #fcfafe; color: #222226; }
  .tip { width: 336px; height: 110px; margin: 13px 14px 0 auto; padding: 12px 8px; background: #e2e1e6; }
  .tip p { margin: 0 0 8px; max-width: 296px; }
  .tip a { color: #2f6c9c; }
  .datum { width: 64px; margin: 3px 0; border-left: 1px solid #b4b4b9; display: flex; flex-direction: column; align-items: center; padding: 7px 3px 0 0; }
  .wave { width: 34px; height: 34px; }
  .datum span { margin: 12px 0 26px; }

  main { flex: 1; min-height: 0; display: flex; }
  .side { width: 348px; flex: none; border-right: 4px solid #e0e0e4; overflow: hidden; }
  .paneltabs { display: flex; height: 32px; background: #e0e1e4; }
  .paneltabs button { padding: 0 8px; }
  .paneltabs .first { width: 39px; padding: 0 13px; background: #fcfafe; }
  .paneltabs svg { width: 20px; height: 20px; }
  .paneltabs .first svg { width: 16px; }
  .tools { display: flex; align-items: center; height: 40px; padding: 0 9px 0 14px; }
  .tools svg { width: 20px; height: 20px; }
  .tools .w18 svg { width: 18px; height: 18px; }
  .tools .grip { width: 4px; margin: 0 22px 0 8px; }
  .tools .w20 { margin-right: 10px; }
  .tools .near { margin-right: 5px; }
  .tools .on { width: 30px; height: 30px; margin-right: 5px; background: #dedee1; border: 1px solid #a9a9ad; display: grid; place-items: center; }
  .tools .w20.last { margin: 0 0 0 auto; }
  .tsep { width: 1px; height: 30px; background: #a3a3a8; margin-right: 10px; }
  .filter { display: flex; align-items: center; height: 34px; padding-left: 13px; }
  .funnel { width: 21px; height: 20px; margin-right: 4px; }
  .fbox { width: 248px; height: 34px; display: flex; align-items: center; background: #fff; border: 1px solid #b0b0b4; margin-right: 6px; }
  .fbox input { flex: 1; min-width: 0; height: 100%; border: 0; outline: 0; }
  .fbox button { padding: 5px; }
  .fbox svg { width: 10px; height: 10px; }
  .plus { margin-left: 14px; }
  .plus svg { width: 14px; height: 14px; }
  .tree { list-style: none; margin: 6px 0 0; padding: 0; font-size: 13px; line-height: 22px; }
  .tree li { display: flex; align-items: center; height: 22px; padding-left: 17px; white-space: nowrap; }
  .tree .root { padding-left: 14px; }
  .tree li span { margin-left: 5px; }
  .ico { width: 20px; height: 20px; }
  .guide { width: 21px; height: 22px; }
  .tree .dim { color: #b9b9b6; }
  .tree .insert { height: 8px; margin: 5px 6px 5px 13px; padding: 0; border: solid #62bf4b; border-width: 0 2px; background: linear-gradient(#62bf4b, #62bf4b) 0 3px / 100% 2px no-repeat; }
  .spark { width: 10px; height: 10px; margin: 0 0 6px 5px; }
  .tree li .new { margin-left: 2px; }
  .scene { flex: 1; min-width: 0; height: 100%; background: #fff; }

  footer { display: flex; align-items: center; height: 42px; flex: none; border-top: 1px solid #b0b0b4; padding: 0 3px 0 7px; background: #fcfafe; }
  footer svg { width: 20px; height: 20px; }
  footer .tri { width: 9px; height: 6px; }
  footer .on { width: 26px; height: 30px; background: #dedee3; border: 1px solid #b0b0b4; display: grid; place-items: center; margin-right: 7px; }
  .sb { margin-right: 10px; }
  .fsep { width: 1px; height: 32px; background: #acacb0; margin-right: 5px; }
  .fsep.a { margin-left: 3px; }
  .fright { margin-left: auto; display: flex; align-items: center; }
  .fright .sb { margin: 0 8px 0 2px; }
  .fright .tri { margin-right: 6px; }
  .fright .tri + .sb { margin-left: 6px; }
  .fs { width: 217px; margin-left: 116px; margin-right: 4px; }
  .fs select { background: linear-gradient(#b0b0b4, #b0b0b4) right 19px top 0 / 1px 100% no-repeat #fcfafe; }
  footer .resize { width: 14px; height: 14px; align-self: flex-end; }
</style>
